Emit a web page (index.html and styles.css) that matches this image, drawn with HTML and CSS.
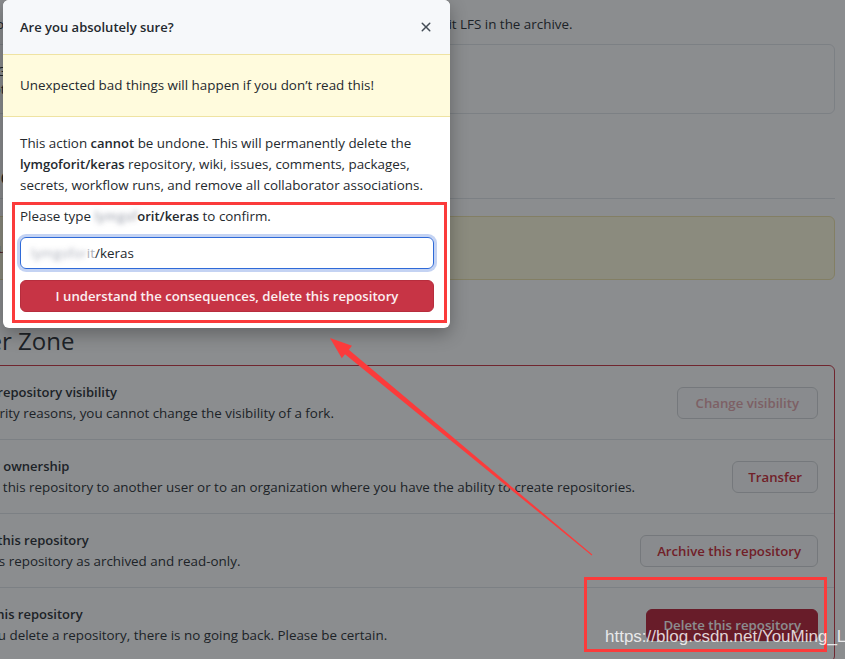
FILE: index.html
```html
<!DOCTYPE html>
<html lang="en">
<head>
<meta charset="utf-8">
<title>Are you absolutely sure?</title>
<link rel="stylesheet" href="styles.css">
</head>
<body>
<div class="content">
  <p class="note">When this option is enabled, source archive downloads will include all Git files for Git LFS in the archive.</p>
  <div class="option-box">
    <div>Include Git LFS objects in archives</div>
    <div>Snapshots will include LFS objects.</div>
  </div>
  <h2 class="subhead">Data services</h2>
  <div class="flash-warn">The features below are not available for this repository.</div>
  <h2 class="danger-title">Danger Zone</h2>
  <div class="danger-box">
    <div class="danger-row">
      <div>
        <div class="row-title">Change repository visibility</div>
        <div>For security reasons, you cannot change the visibility of a fork.</div>
      </div>
      <span class="btn btn-disabled">Change visibility</span>
    </div>
    <div class="danger-row">
      <div>
        <div class="row-title">Transfer ownership</div>
        <div>Transfer this repository to another user or to an organization where you have the ability to create repositories.</div>
      </div>
      <span class="btn btn-small">Transfer</span>
    </div>
    <div class="danger-row">
      <div>
        <div class="row-title">Archive this repository</div>
        <div>Mark this repository as archived and read-only.</div>
      </div>
      <span class="btn">Archive this repository</span>
    </div>
    <div class="danger-row">
      <div>
        <div class="row-title">Delete this repository</div>
        <div>Once you delete a repository, there is no going back. Please be certain.</div>
      </div>
      <span class="btn btn-fill">Delete this repository</span>
    </div>
  </div>
</div>

<div class="overlay"></div>

<div class="modal">
  <div class="modal-header">
    <h3 class="modal-title">Are you absolutely sure?</h3>
    <span class="close">
      <svg width="16" height="16" viewBox="0 0 16 16"><path fill="currentColor" d="M3.72 3.72a.75.75 0 011.06 0L8 6.94l3.22-3.22a.75.75 0 111.06 1.06L9.06 8l3.22 3.22a.75.75 0 11-1.06 1.06L8 9.06l-3.22 3.22a.75.75 0 01-1.06-1.06L6.94 8 3.72 4.78a.75.75 0 010-1.06z"/></svg>
    </span>
  </div>
  <div class="modal-flash">Unexpected bad things will happen if you don’t read this!</div>
  <div class="modal-body">
    <p>This action <b>cannot</b> be undone. This will permanently delete the <b>lymgoforit/keras</b> repository, wiki, issues, comments, packages, secrets, workflow runs, and remove all collaborator associations.</p>
    <p>Please type <b><span class="smudge">lymgof</span>orit/keras</b> to confirm.</p>
    <div class="input"><span class="smudge">lymgofor</span><span class="faint">it</span>/keras</div>
    <span class="btn btn-confirm">I understand the consequences, delete this repository</span>
  </div>
</div>

<div class="mark mark-modal"></div>
<div class="mark mark-delete"></div>
<svg class="arrow" width="845" height="659" viewBox="0 0 845 659">
  <polygon fill="#fb3b3b" points="330,338 352,345.8 348.8,349.7 592.3,554.6 591.7,555.4 345,354.3 341.8,358.2"/>
</svg>
<div class="watermark">https://blog.csdn.net/YouMing_Li</div>
</body>
</html>
```

FILE: styles.css
```css
* { box-sizing: border-box; }

html, body { margin: 0; }

body {
  position: relative;
  width: 845px;
  height: 659px;
  overflow: hidden;
  background: #fff;
  color: #24292e;
  font-family: "Open Sans", "Noto Sans", sans-serif;
  font-size: 13.4px;
  line-height: 21px;
}

b { font-weight: 600; font-size: 13px; }

/* background settings page */
.content {
  margin-left: -70px;
  width: 905px;
}

.note {
  margin: 0;
  padding-top: 14px;
  white-space: nowrap;
}

.option-box {
  margin-top: 9px;
  height: 70px;
  border: 1px solid #e1e4e8;
  border-radius: 6px;
  padding: 17px 16px;
  line-height: 18px;
}

.subhead {
  margin: 44px 0 0;
  padding-bottom: 4px;
  border-bottom: 1px solid #e1e4e8;
  font-size: 24px;
  font-weight: 400;
  line-height: 36px;
}

.flash-warn {
  margin-top: 17px;
  height: 64px;
  padding: 21px 16px;
  background: #fffbdd;
  border: 1px solid #eee2a8;
  border-radius: 6px;
  color: #86181d;
}

.danger-title {
  margin: 43px 0 0;
  font-size: 24px;
  font-weight: 400;
  line-height: 36px;
}

.danger-box {
  margin-top: 6px;
  border: 1px solid #c8303f;
  border-radius: 6px;
}

.danger-row {
  display: flex;
  align-items: center;
  justify-content: space-between;
  padding: 16px 16px 15px;
}

.danger-row + .danger-row { border-top: 1px solid #e1e4e8; }

.row-title { font-weight: 600; font-size: 13px; }

.btn {
  display: inline-flex;
  align-items: center;
  justify-content: center;
  height: 32px;
  padding: 0 16px;
  border: 1px solid #d3d5d8;
  border-radius: 6px;
  background: #fafbfc;
  color: #cb2431;
  font-size: 13.2px;
  font-weight: 600;
  white-space: nowrap;
}

.btn-small { padding: 0 15px; }

.btn-disabled { color: #e3a4aa; padding: 0 18px; }

.btn-fill {
  background: #b81d33;
  border-color: #b81d33;
  color: #fff;
}

/* dim layer */
.overlay {
  position: absolute;
  inset: 0;
  background: rgba(24, 27, 31, 0.5);
}

/* dialog */
.modal {
  position: absolute;
  left: 3px;
  top: 0;
  width: 447px;
  background: #fff;
  border-radius: 6px;
  overflow: hidden;
  box-shadow: 0 6px 18px rgba(0, 0, 0, 0.3);
}

.modal-header {
  display: flex;
  align-items: center;
  justify-content: space-between;
  height: 54px;
  padding: 0 16px 0 17px;
  background: #f6f8fa;
}

.modal-title {
  margin: 0;
  font-size: 13px;
  font-weight: 600;
}

.close {
  display: flex;
  color: #444d56;
}

.modal-flash {
  padding: 20px 17px;
  background: #fffbdd;
  border-top: 1px solid #efe3a2;
  border-bottom: 1px solid #efe3a2;
}

.modal-body { padding: 16px 16px 16px 17px; }

.modal-body p { margin: 0 0 10px; }

.modal-body p + p { margin-bottom: 0; }

.smudge {
  color: transparent;
  text-shadow: 0 0 5px rgba(140, 145, 160, 0.7);
}

.faint { color: #b0b4bc; }

.input {
  display: flex;
  align-items: center;
  height: 32px;
  margin-top: 10px;
  padding: 0 10px;
  border: 1px solid #2f6ad8;
  border-radius: 6px;
  box-shadow: 0 0 0 3px rgba(60, 110, 215, 0.3);
}

.btn-confirm {
  display: flex;
  width: 100%;
  margin-top: 11px;
  background: #c73445;
  border-color: #b72d3d;
  color: #fbeef0;
}

/* screenshot annotations */
.mark {
  position: absolute;
  border: 3px solid #fb3b3b;
}

.mark-modal {
  left: 12px;
  top: 202px;
  width: 435px;
  height: 121px;
}

.mark-delete {
  left: 584px;
  top: 577px;
  width: 243px;
  height: 75px;
}

.arrow {
  position: absolute;
  left: 0;
  top: 0;
}

.watermark {
  position: absolute;
  left: 605px;
  top: 627px;
  font-family: "Liberation Sans", Arial, sans-serif;
  font-size: 17px;
  line-height: 20px;
  color: rgba(255, 255, 255, 0.82);
  white-space: nowrap;
}
```
